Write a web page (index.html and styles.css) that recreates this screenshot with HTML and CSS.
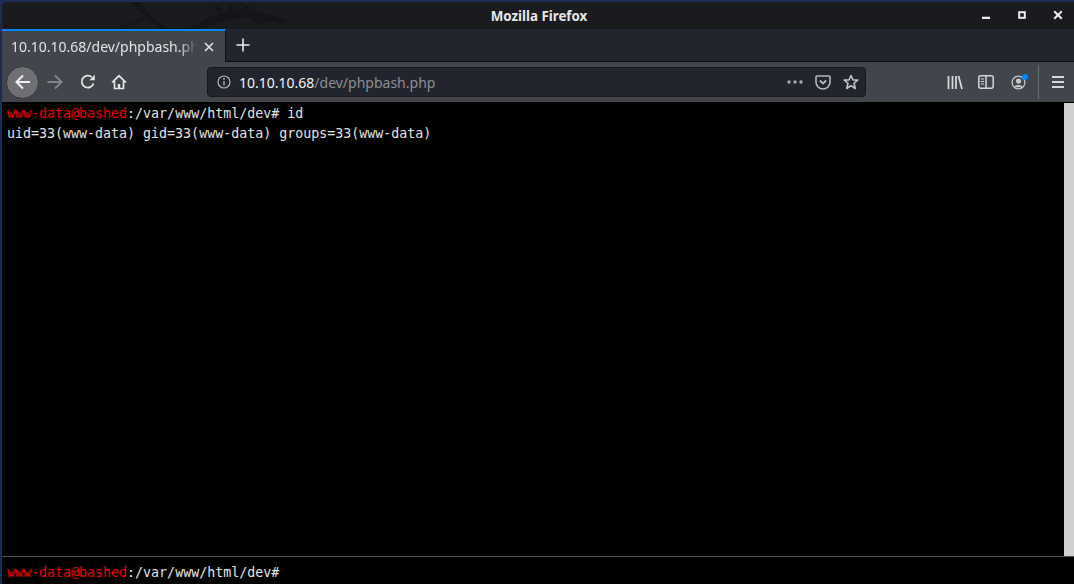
FILE: index.html
```html
<!DOCTYPE html>
<html lang="en">
<head>
<meta charset="utf-8">
<title>Mozilla Firefox</title>
<link rel="stylesheet" href="styles.css">
</head>
<body>
<div class="window">
  <header class="titlebar">
    <svg class="dragon" width="300" height="27" viewBox="0 0 300 27" fill="#141519"><path d="M138 0 C146 12 154 21 166 26 L183 26 C198 22 210 12 230 8 C243 6 253 7 260 10 L270 13 L286 17 L282 23 L268 19 L256 22 L250 16 C233 14 213 22 198 27 H158 C148 20 138 10 128 0 Z"/><path d="M211 2 L222 8 L216 10 Z M224 1 L234 6 L228 8 Z M238 1 L252 6 L243 7 Z"/><path d="M118 24 L140 15 L144 18 L124 27 H118 Z" fill="#16171b"/></svg>
    <span class="title">Mozilla Firefox</span>
    <div class="wincontrols">
      <svg width="10" height="10" viewBox="0 0 10 10"><rect x="1" y="6.700" width="8" height="2.300" fill="#eee"/></svg>
      <svg width="10" height="10" viewBox="0 0 10 10"><rect x="2.200" y="2.200" width="5.600" height="5.600" fill="none" stroke="#eee" stroke-width="2"/></svg>
      <svg width="10" height="10" viewBox="0 0 10 10"><path d="M1.200 1.200 8.800 8.800M8.800 1.200 1.200 8.800" stroke="#eee" stroke-width="2" fill="none"/></svg>
    </div>
  </header>
  <div class="tabbar">
    <div class="tab">
      <span class="tabtext">10.10.10.68/dev/phpbash.php</span>
      <svg class="tabclose" width="12" height="12" viewBox="0 0 12 12"><path d="M2 2 10 10M10 2 2 10" stroke="#e4e4e5" stroke-width="1.600" fill="none"/></svg>
    </div>
    <svg class="newtab" width="16" height="16" viewBox="0 0 16 16"><path d="M8 1.500V14.500M1.500 8H14.500" stroke="#ececed" stroke-width="1.600" fill="none"/></svg>
  </div>
  <nav class="toolbar">
    <div class="backbtn">
      <svg width="18" height="18" viewBox="0 0 18 18"><path d="M16 9H2.500M9 2.500 2.500 9 9 15.500" stroke="#f0f0f1" stroke-width="2" fill="none"/></svg>
    </div>
    <svg class="forward" width="18" height="18" viewBox="0 0 18 18"><path d="M1.500 9H15.500M9 2.500 15.500 9 9 15.500" stroke="#83858a" stroke-width="2" fill="none"/></svg>
    <svg class="reload" width="16" height="16" viewBox="0 0 16 16"><path d="M13.500 9.500A6 6 0 1 1 11.800 3.200" stroke="#e6e6e7" stroke-width="1.800" fill="none"/><path d="M14.800 0.800V6.300H9.300Z" fill="#e6e6e7"/></svg>
    <svg class="home" width="16" height="16" viewBox="0 0 16 16"><path d="M1 8.500 8 1.800 15 8.500M3.500 7V14.500H12.500V7" stroke="#e6e6e7" stroke-width="1.700" fill="none"/><rect x="6.800" y="10" width="2.400" height="4.500" fill="#e6e6e7"/></svg>
    <div class="urlbar">
      <svg class="info" width="14" height="14" viewBox="0 0 14 14"><circle cx="7" cy="7" r="6" fill="none" stroke="#b4b5b8" stroke-width="1.200"/><path d="M7 6V10.500" stroke="#b4b5b8" stroke-width="1.300"/><circle cx="7" cy="3.900" r="0.900" fill="#b4b5b8"/></svg>
      <span class="url"><span class="host">10.10.10.68</span>/dev/phpbash.php</span>
      <svg class="dots" width="16" height="4" viewBox="0 0 16 4"><circle cx="2" cy="2" r="1.700" fill="#a9aaad"/><circle cx="8" cy="2" r="1.700" fill="#a9aaad"/><circle cx="14" cy="2" r="1.700" fill="#a9aaad"/></svg>
      <svg class="pocket" width="16" height="15" viewBox="0 0 16 15"><path d="M2 1H14A1 1 0 0 1 15 2V7A7 7 0 0 1 1 7V2A1 1 0 0 1 2 1Z" fill="none" stroke="#b6b7ba" stroke-width="1.600"/><path d="M4.800 5.500 8 8.500 11.200 5.500" fill="none" stroke="#b6b7ba" stroke-width="1.800"/></svg>
      <svg class="star" width="16" height="16" viewBox="0 0 16 16"><path d="M8 1.500 10 6H14.800L11 9.300 12.300 14.500 8 11.700 3.700 14.500 5 9.300 1.200 6H6Z" fill="none" stroke="#c2c3c5" stroke-width="1.600" stroke-linejoin="round"/></svg>
    </div>
    <div class="tools">
      <svg width="16" height="15" viewBox="0 0 16 15"><path d="M1.500 1V14M5.500 1V14M9 1V14M11.500 1 15 14" stroke="#d6d6d8" stroke-width="1.800" fill="none"/></svg>
      <svg class="sidebar" width="16" height="14" viewBox="0 0 16 14"><rect x="0.800" y="0.800" width="14.400" height="12.400" rx="2" fill="none" stroke="#d6d6d8" stroke-width="1.500"/><path d="M8 1V13" stroke="#d6d6d8" stroke-width="1.500"/><path d="M2.800 4H6M2.800 6.500H6M2.800 9H6" stroke="#d6d6d8" stroke-width="1"/></svg>
      <div class="account">
        <svg width="15" height="15" viewBox="0 0 16 16"><circle cx="8" cy="8" r="6.800" fill="none" stroke="#c9c9cb" stroke-width="1.300"/><circle cx="8" cy="6.500" r="2.800" fill="#c9c9cb"/><path d="M3.500 13C4.500 10 11.500 10 12.500 13Z" fill="#c9c9cb"/></svg>
        <span class="badge"></span>
      </div>
    </div>
    <div class="sep"></div>
    <svg class="menu" width="12" height="12" viewBox="0 0 12 12"><path d="M0 1H12M0 6H12M0 11H12" stroke="#d8d8da" stroke-width="1.800" fill="none"/></svg>
  </nav>
  <main class="page">
    <div class="output">
      <div class="pane">
        <div class="line"><span class="user">www-data@bashed</span>:/var/www/html/dev# id</div>
        <div class="line">uid=33(www-data) gid=33(www-data) groups=33(www-data)</div>
      </div>
      <div class="scrollbar"></div>
    </div>
    <div class="prompt"><span class="user">www-data@bashed</span>:/var/www/html/dev#</div>
  </main>
</div>
</body>
</html>
```
FILE: styles.css
```css
* { box-sizing: border-box; }
html, body { margin: 0; height: 100%; }
body {
  background: #1c2c52;
  padding: 2px 0 0 2px;
  overflow: hidden;
}
.window {
  height: 582px;
  display: flex;
  flex-direction: column;
  border-top-left-radius: 5px;
  overflow: hidden;
  background: #1a1b20;
}
.titlebar {
  height: 27px;
  flex: none;
  display: flex;
  align-items: center;
  justify-content: center;
  background: #1a1b1f;
  position: relative;
}
.dragon { position: absolute; left: 0; top: 0; }
.title {
  font: 700 13.33px "Noto Sans", "Open Sans", sans-serif;
  color: #e6e6e6;
  position: relative;
  margin-left: 2px;
}
.wincontrols {
  position: absolute;
  right: 0;
  top: 8px;
  display: flex;
  gap: 26px;
  padding-right: 11px;
}
.tabbar {
  height: 33px;
  flex: none;
  display: flex;
  background: #23252e;
  border-bottom: 1px solid #0e0f12;
}
.tab {
  width: 224px;
  margin-bottom: -1px;
  background: #42454c;
  border-top: 2px solid #0a84ff;
  border-right: 1px solid #0e0f12;
  display: flex;
  align-items: center;
  padding-left: 9px;
  color: #e3e3e4;
  font: 14px "Noto Sans", "Open Sans", sans-serif;
  position: relative;
  z-index: 1;
}
.tabtext {
  flex: 1;
  overflow: hidden;
  white-space: nowrap;
  -webkit-mask-image: linear-gradient(to right, #000 168px, transparent 186px);
  mask-image: linear-gradient(to right, #000 168px, transparent 186px);
}
.tabclose { flex: none; margin: 0 10px 0 6px; }
.newtab { margin: 8px 0 0 9px; }
.toolbar {
  height: 40px;
  flex: none;
  display: flex;
  align-items: center;
  background: #42454c;
  padding-left: 4px;
}
.backbtn {
  width: 33px;
  height: 33px;
  border-radius: 50%;
  background: #6e7074;
  border: 1px solid #36383d;
  display: flex;
  align-items: center;
  justify-content: center;
}
.forward { margin-left: 7px; }
.reload { margin-left: 16px; }
.home { margin-left: 15px; }
.urlbar {
  width: 659px;
  height: 30px;
  margin-left: 80px;
  flex: none;
  background: #23252e;
  border: 1px solid #17181c;
  border-radius: 4px;
  display: flex;
  align-items: center;
  padding: 0 6px 0 9px;
  font: 14px "Noto Sans", "Open Sans", sans-serif;
}
.url { flex: 1; margin-left: 8px; color: #8c8e92; white-space: nowrap; }
.host { color: #f2f2f3; }
.pocket { margin-left: 12px; }
.star { margin-left: 12px; }
.tools {
  margin-left: 81px;
  display: flex;
  align-items: center;
  gap: 15px;
}
.account { position: relative; width: 15px; height: 15px; margin-left: 2px; }
.account svg { display: block; }
.badge {
  position: absolute;
  right: -2px;
  top: -1px;
  width: 6px;
  height: 6px;
  border-radius: 50%;
  background: #0a84ff;
}
.sep { width: 1px; height: 34px; background: #6a6c71; margin-left: 12px; }
.menu { margin-left: 13px; }
.page {
  flex: 1;
  min-height: 0;
  display: flex;
  flex-direction: column;
  background: #000;
  color: #e4e4e4;
  font: 13.31px/19px "DejaVu Sans Mono", monospace;
}
.output { flex: 1; min-height: 0; display: flex; }
.pane { flex: 1; padding: 2px 0 0 5px; }
.line { white-space: pre; height: 20px; }
.scrollbar { width: 10px; background: #cfcfcf; margin-top: 1px; }
.prompt {
  height: 28px;
  border-top: 1px solid #505050;
  padding: 6px 0 0 5px;
  white-space: pre;
}
.user { color: #f00000; }
```
